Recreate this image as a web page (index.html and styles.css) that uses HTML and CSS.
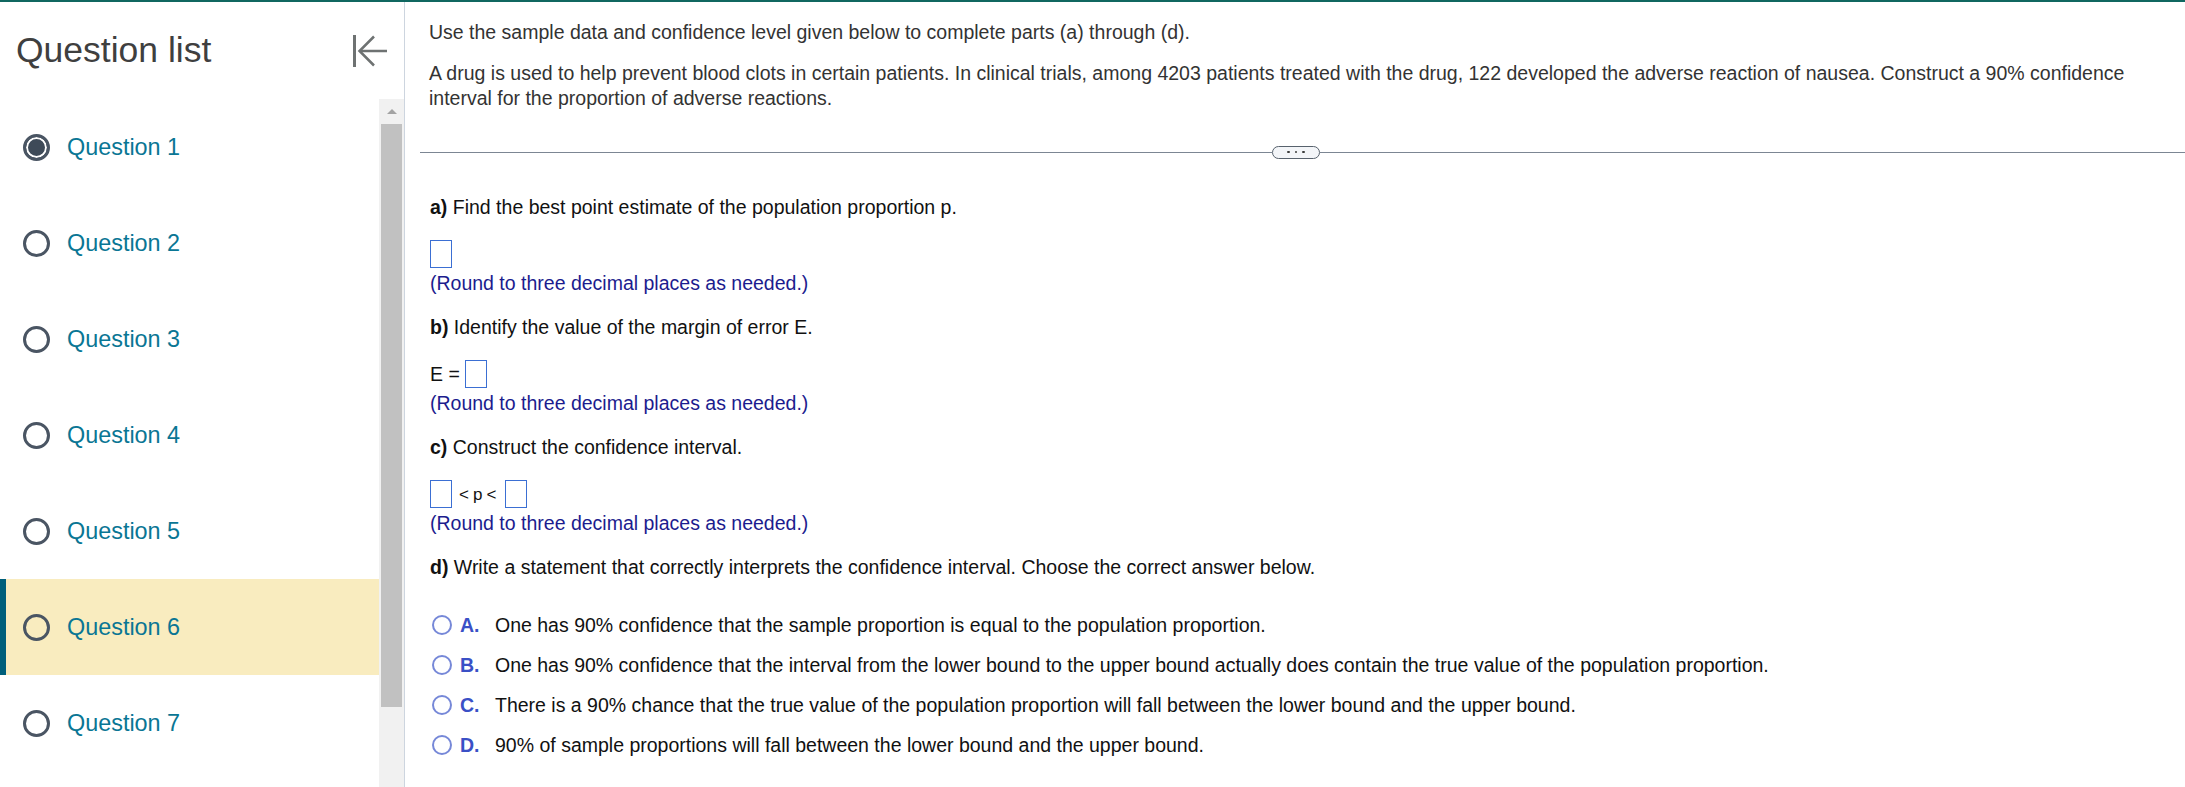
FILE: index.html
```html
<!DOCTYPE html>
<html lang="en">

<head>
    <meta charset="UTF-8">
    <meta name="viewport" content="width=device-width, initial-scale=1.0">
    <title>Question list</title>
    <link rel="stylesheet" href="styles.css">
</head>

<body>
    <div class="app">
        <aside class="sidebar">
            <div class="sidebar-head">
                <h1>Question list</h1>
                <button class="collapse" title="Collapse question list">
                    <svg width="34" height="32" viewBox="0 0 34 32" fill="none" stroke="#6e7272">
                        <line x1="1.5" y1="0" x2="1.5" y2="32" stroke-width="3" />
                        <line x1="7" y1="16" x2="34" y2="16" stroke-width="2.5" />
                        <polyline points="21,1.5 6.5,16 21,30.5" stroke-width="2.5" />
                    </svg>
                </button>
            </div>
            <div class="sidebar-body">
                <ul class="qlist">
                    <li class="qitem"><span class="radio checked"></span>Question 1</li>
                    <li class="qitem"><span class="radio"></span>Question 2</li>
                    <li class="qitem"><span class="radio"></span>Question 3</li>
                    <li class="qitem"><span class="radio"></span>Question 4</li>
                    <li class="qitem"><span class="radio"></span>Question 5</li>
                    <li class="qitem current"><span class="radio"></span>Question 6</li>
                    <li class="qitem"><span class="radio"></span>Question 7</li>
                </ul>
                <div class="scrollbar">
                    <div class="scroll-up"></div>
                    <div class="scroll-thumb"></div>
                </div>
            </div>
        </aside>

        <main class="content">
            <div class="intro">
                <p>Use the sample data and confidence level given below to complete parts (a) through (d).</p>
                <p>A drug is used to help prevent blood clots in certain patients. In clinical trials, among 4203 patients treated with the drug, 122 developed the adverse reaction of nausea. Construct a 90% confidence interval for the proportion of adverse reactions.</p>
            </div>

            <div class="divider"><span class="more"><i></i><i></i><i></i></span></div>

            <div class="parts">
                <div class="part">
                    <p class="prompt"><b>a)</b> Find the best point estimate of the population proportion p.</p>
                    <div class="answer"><span class="box"></span></div>
                    <p class="hint">(Round to three decimal places as needed.)</p>
                </div>
                <div class="part">
                    <p class="prompt"><b>b)</b> Identify the value of the margin of error E.</p>
                    <div class="answer"><span class="label">E =</span><span class="box"></span></div>
                    <p class="hint">(Round to three decimal places as needed.)</p>
                </div>
                <div class="part">
                    <p class="prompt"><b>c)</b> Construct the confidence interval.</p>
                    <div class="answer"><span class="box"></span><span class="between">&lt;p&lt;</span><span class="box"></span></div>
                    <p class="hint">(Round to three decimal places as needed.)</p>
                </div>
                <div class="part">
                    <p class="prompt"><b>d)</b> Write a statement that correctly interprets the confidence interval. Choose the correct answer below.</p>
                    <ul class="choices">
                        <li class="choice"><span class="opt"></span><span class="letter">A.</span>One has 90% confidence that the sample proportion is equal to the population proportion.</li>
                        <li class="choice"><span class="opt"></span><span class="letter">B.</span>One has 90% confidence that the interval from the lower bound to the upper bound actually does contain the true value of the population proportion.</li>
                        <li class="choice"><span class="opt"></span><span class="letter">C.</span>There is a 90% chance that the true value of the population proportion will fall between the lower bound and the upper bound.</li>
                        <li class="choice"><span class="opt"></span><span class="letter">D.</span>90% of sample proportions will fall between the lower bound and the upper bound.</li>
                    </ul>
                </div>
            </div>
        </main>
    </div>
</body>

</html>
```

FILE: styles.css
```css
body {
    margin: 0;
    font-family: "Liberation Sans", Arial, sans-serif;
    background: #fff;
    overflow: hidden;
}

.app {
    display: flex;
    height: 785px;
    border-top: 2px solid #106760;
}

/* sidebar */

.sidebar {
    width: 404px;
    flex-shrink: 0;
    display: flex;
    flex-direction: column;
    border-right: 1px solid #cdd5df;
}

.sidebar-head {
    height: 97px;
    display: flex;
    align-items: center;
    justify-content: space-between;
    padding: 0 17px 0 16px;
}

.sidebar-head h1 {
    margin: 0;
    font-size: 35.5px;
    font-weight: normal;
    color: #3f3f3f;
}

.collapse {
    background: none;
    border: 0;
    padding: 0;
    width: 34px;
    height: 32px;
}

.collapse svg {
    display: block;
}

.sidebar-body {
    flex: 1;
    min-height: 0;
    display: flex;
    overflow: hidden;
}

.qlist {
    list-style: none;
    margin: 0;
    padding: 0;
    width: 379px;
    flex-shrink: 0;
}

.qitem {
    height: 96px;
    display: flex;
    align-items: center;
    gap: 17px;
    padding-left: 23px;
    font-size: 23.4px;
    color: #0a7694;
}

.qitem.current {
    background: #f9ecbf;
    box-shadow: inset 6px 0 0 #005f7b;
}

.radio {
    width: 27px;
    height: 27px;
    box-sizing: border-box;
    border: 3px solid #4a5563;
    border-radius: 50%;
    flex-shrink: 0;
}

.radio.checked {
    background: #3e4a58;
    box-shadow: inset 0 0 0 2px #fff;
}

.scrollbar {
    width: 25px;
    background: #f1f1f1;
    display: flex;
    flex-direction: column;
}

.scroll-up {
    height: 25px;
    display: flex;
    align-items: center;
    justify-content: center;
}

.scroll-up::after {
    content: "";
    border-left: 5px solid transparent;
    border-right: 5px solid transparent;
    border-bottom: 5px solid #a3a3a3;
}

.scroll-thumb {
    height: 583px;
    margin: 0 2px;
    background: #c1c1c1;
}

/* question */

.content {
    flex: 1;
    min-width: 0;
    padding-left: 15px;
}

.intro {
    padding: 17.5px 40px 0 9px;
    font-size: 19.5px;
    line-height: 25px;
    color: #333;
}

.intro p {
    margin: 0;
}

.intro p + p {
    margin-top: 16px;
}

.divider {
    display: flex;
    align-items: center;
    margin-top: 35px;
}

.divider::before,
.divider::after {
    content: "";
    flex: 1 0 0;
    height: 1px;
    background: #7c8693;
}

.divider::after {
    flex-basis: 13px;
}

.more {
    width: 48px;
    height: 13px;
    box-sizing: border-box;
    border: 1px solid #58626d;
    border-radius: 7px;
    background: #f3f5f8;
    display: flex;
    align-items: center;
    justify-content: center;
    gap: 5px;
}

.more i {
    width: 2.5px;
    height: 2.5px;
    border-radius: 50%;
    background: #3c3c3c;
}

.parts {
    margin-top: 36px;
    padding-left: 10px;
    font-size: 19.5px;
    line-height: 25px;
    color: #111;
}

.part + .part {
    margin-top: 19px;
}

.prompt {
    margin: 0 0 20px;
}

.answer {
    height: 29px;
    display: flex;
    align-items: center;
}

.box {
    width: 22px;
    height: 28px;
    box-sizing: border-box;
    border: 1px solid #3b6fd3;
}

.label {
    margin-right: 5px;
}

.between {
    margin: 0 5px 0 7px;
    letter-spacing: 4px;
    font-size: 17px;
}

.hint {
    margin: 2px 0 0;
    color: #1c1c8e;
}

.choices {
    list-style: none;
    margin: 25.5px 0 0;
    padding: 0;
}

.choice {
    height: 40px;
    display: flex;
    align-items: center;
}

.opt {
    width: 20px;
    height: 20px;
    box-sizing: border-box;
    border: 2px solid #7688d8;
    border-radius: 50%;
    margin: 0 8px 0 2px;
    flex-shrink: 0;
}

.letter {
    width: 35px;
    font-weight: bold;
    color: #3a50c6;
}
```
